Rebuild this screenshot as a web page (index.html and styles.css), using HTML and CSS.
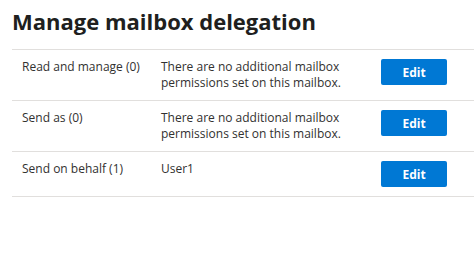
FILE: index.html
```html
<!DOCTYPE html>
<html lang="en">

<head>
    <meta charset="UTF-8">
    <meta name="viewport" content="width=device-width, initial-scale=1.0">
    <title>Manage mailbox delegation</title>
    <link rel="stylesheet" href="styles.css">
</head>

<body>
    <div class="wrap">
        <h1 class="title">Manage mailbox delegation</h1>
        <div class="list">
            <div class="row">
                <div class="label">Read and manage (0)</div>
                <div class="desc">There are no additional mailbox permissions set on this mailbox.</div>
                <button class="btn">Edit</button>
            </div>
            <div class="row">
                <div class="label">Send as (0)</div>
                <div class="desc">There are no additional mailbox permissions set on this mailbox.</div>
                <button class="btn">Edit</button>
            </div>
            <div class="row">
                <div class="label">Send on behalf (1)</div>
                <div class="desc">User1</div>
                <button class="btn">Edit</button>
            </div>
        </div>
    </div>
</body>

</html>
```

FILE: styles.css
```css
* {
    margin: 0;
    padding: 0;
    box-sizing: border-box;
}

body {
    background: #fff;
    font-family: "Open Sans", "Noto Sans", sans-serif;
    color: #323130;
}

.wrap {
    padding-left: 12px;
}

.title {
    font-size: 22px;
    font-weight: 700;
    color: #201f1e;
    line-height: 30px;
    padding-top: 6px;
    height: 49px;
}

.list {
    border-top: 1px solid #e1dfdd;
}

.row {
    display: grid;
    grid-template-columns: 139px 220px 66px;
    align-items: start;
    padding: 9px 0 9px 10px;
    border-bottom: 1px solid #e1dfdd;
    font-size: 12px;
    line-height: 16px;
}

.desc {
    width: 200px;
}

.btn {
    height: 26px;
    border: none;
    border-radius: 2px;
    background: #0078d4;
    color: #fff;
    font-family: inherit;
    font-size: 12px;
    font-weight: 700;
}
```
